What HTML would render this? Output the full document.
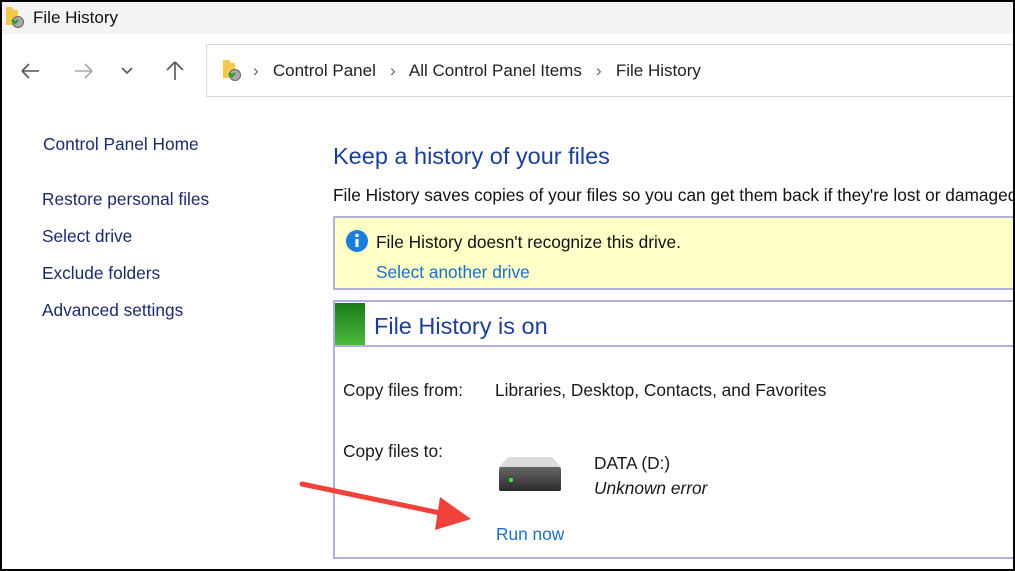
<!DOCTYPE html>
<html><head><meta charset="utf-8"><style>
*{margin:0;padding:0;box-sizing:border-box}
body{width:1015px;height:571px;overflow:hidden;background:#fff;font-family:"Liberation Sans",sans-serif;position:relative;color:#1a1a1a}
.a{position:absolute;white-space:nowrap}
.frame{position:absolute;left:0;top:0;width:1015px;height:571px;border:2px solid #000;pointer-events:none}
.nav{font-size:17.3px;color:#1c2a6e}
.link{color:#1a6fc9}
.t{font-size:17.3px}
</style></head><body>
<div class="a" style="left:0;top:0;width:1015px;height:34px;background:#f3f3f3"></div>
<svg class="a" style="left:4px;top:5px" width="22" height="24" viewBox="0 0 22 24"><path d="M2 2h6l2 3h4v15H2z" fill="#f2c94c"/><circle cx="14" cy="17" r="5.5" fill="#aaa" stroke="#666"/><path d="M8 15l3 3 3-3" stroke="#2a9d3a" stroke-width="2.5" fill="none"/></svg>
<div class="a" style="left:33px;top:8px;font-size:17px;color:#111">File History</div>
<svg class="a" style="left:18px;top:58px" width="180" height="26" viewBox="0 0 180 26">
<path d="M4 13h17M4 13l7-7M4 13l7 7" stroke="#555" stroke-width="1.6" fill="none"/>
<path d="M57 13h17M74 13l-7-7M74 13l-7 7" stroke="#aaa" stroke-width="1.6" fill="none"/>
<path d="M104 10l5 5 5-5" stroke="#555" stroke-width="1.6" fill="none"/>
<path d="M157 22V4M157 4l-8 8M157 4l8 8" stroke="#555" stroke-width="1.6" fill="none"/>
</svg>
<div class="a" style="left:206px;top:44px;width:820px;height:53px;border:1px solid #d9d9d9;background:#fff"></div>
<svg class="a" style="left:221px;top:58px" width="22" height="24" viewBox="0 0 22 24"><path d="M2 2h6l2 3h4v15H2z" fill="#f2c94c"/><circle cx="14" cy="17" r="5.5" fill="#aaa" stroke="#666"/><path d="M8 15l3 3 3-3" stroke="#2a9d3a" stroke-width="2.5" fill="none"/></svg>
<div class="a" style="left:253px;top:61px;font-size:17px;color:#222"><span style="color:#666">›</span>&nbsp;&nbsp; Control Panel &nbsp;&nbsp;<span style="color:#666">›</span>&nbsp;&nbsp; All Control Panel Items &nbsp;&nbsp;<span style="color:#666">›</span>&nbsp;&nbsp; File History</div>
<div class="a nav" style="left:43px;top:134px">Control Panel Home</div>
<div class="a nav" style="left:42px;top:189px">Restore personal files</div>
<div class="a nav" style="left:42px;top:226px">Select drive</div>
<div class="a nav" style="left:42px;top:263px">Exclude folders</div>
<div class="a nav" style="left:42px;top:300px">Advanced settings</div>
<div class="a" style="left:333px;top:143px;font-size:23.5px;color:#1c3f9a">Keep a history of your files</div>
<div class="a t" style="left:333px;top:185px;color:#111">File History saves copies of your files so you can get them back if they're lost or damaged.</div>
<div class="a" style="left:333px;top:216px;width:700px;height:74px;background:#ffffc8;border:2px solid #aeb2d8"></div>
<svg class="a" style="left:345px;top:229px" width="24" height="24"><circle cx="12" cy="12" r="11" fill="#1a7fd8"/><rect x="10.5" y="10" width="3" height="8" fill="#fff"/><circle cx="12" cy="6.5" r="1.8" fill="#fff"/></svg>
<div class="a t" style="left:376px;top:232px;color:#111">File History doesn't recognize this drive.</div>
<div class="a link t" style="left:376px;top:262px">Select another drive</div>
<div class="a" style="left:333px;top:300px;width:700px;height:259px;border:2px solid #aeb2d8"></div>
<div class="a" style="left:335px;top:345px;width:690px;height:2px;background:#aeb2d8"></div>
<div class="a" style="left:335px;top:303px;width:30px;height:42px;background:linear-gradient(#1a7a1a,#4cba3c)"></div>
<div class="a" style="left:374px;top:313px;font-size:23.5px;color:#1c3f9a">File History is on</div>
<div class="a t" style="left:343px;top:380px">Copy files from:</div>
<div class="a t" style="left:495px;top:380px">Libraries, Desktop, Contacts, and Favorites</div>
<div class="a t" style="left:343px;top:441px">Copy files to:</div>
<svg class="a" style="left:498px;top:455px" width="66" height="38" viewBox="0 0 66 38"><defs><linearGradient id="g" x1="0" y1="0" x2="0" y2="1"><stop offset="0" stop-color="#666"/><stop offset="1" stop-color="#2a2a2a"/></linearGradient></defs><path d="M10 2h44l9 10H1z" fill="#dcdcdc"/><rect x="1" y="12" width="62" height="24" rx="2" fill="url(#g)"/><circle cx="13" cy="25" r="2" fill="#3f3"/></svg>
<div class="a t" style="left:594px;top:453px">DATA (D:)</div>
<div class="a t" style="left:594px;top:478px;font-style:italic">Unknown error</div>
<div class="a link t" style="left:496px;top:524px">Run now</div>
<svg class="a" style="left:295px;top:475px" width="185" height="60"><path d="M7 9L150 39" stroke="#f0413a" stroke-width="5" stroke-linecap="round"/><path d="M176 44L145 22 140 55z" fill="#f0413a"/></svg>
<div class="frame"></div>
</body></html>
